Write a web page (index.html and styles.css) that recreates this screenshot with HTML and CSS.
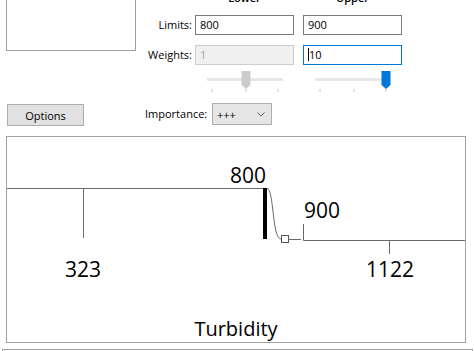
FILE: index.html
```html
<!DOCTYPE html>
<html lang="en">
<head>
  <meta charset="UTF-8" />
  <title>Limit editor</title>
  <link rel="stylesheet" href="styles.css">
</head>
<body>
  <!-- top: preview + limits/weights -->
  <div class="top">
    <div class="preview"></div>
    <div class="form">
      <div></div>
      <div class="colhead">Lower</div>
      <div class="colhead">Upper</div>

      <div class="lbl">Limits:</div>
      <div class="field">800</div>
      <div class="field">900</div>

      <div class="lbl">Weights:</div>
      <div class="field disabled">1</div>
      <div class="field focused"><span class="caret"></span>10</div>

      <div></div>
      <svg class="slider" width="90" height="24" viewBox="0 0 90 24">
        <rect x="0" y="8" width="76" height="3" fill="#e7e7e7"/>
        <path d="M5 19v3M39 19v3M71 19v3" stroke="#c8c8c8" stroke-width="1"/>
        <path d="M34.5 1h9v14l-4.5 4l-4.5-4z" fill="#cccccc"/>
      </svg>
      <svg class="slider" width="90" height="24" viewBox="0 0 90 24">
        <rect x="0" y="8" width="74" height="3" fill="#e7e7e7"/>
        <path d="M5 19v3M39 19v3M71 19v3" stroke="#c8c8c8" stroke-width="1"/>
        <path d="M66.5 1h9v14l-4.5 4l-4.5-4z" fill="#0078d7"/>
      </svg>
    </div>
  </div>

  <!-- options / importance -->
  <div class="controls">
    <button class="btn" type="button">Options</button>
    <span class="imp-label">Importance:</span>
    <div class="combo">
      <span>+++</span>
      <svg width="8" height="5" viewBox="0 0 8 5"><path d="M0.5 0.5l3.5 3.5l3.5-3.5" fill="none" stroke="#606060"/></svg>
    </div>
  </div>

  <!-- chart -->
  <div class="chart">
    <svg width="458" height="205" viewBox="0 0 458 205">
      <g stroke="#6a6a6a" stroke-width="1" fill="none">
        <path d="M0 51.5H257"/>
        <path d="M76.5 51V101"/>
        <path d="M260 51.5C267 51.5 265 102 274 102"/>
        <path d="M282 102.5H294"/>
        <path d="M296.5 87V103.5H458"/>
        <path d="M382.5 103V117"/>
      </g>
      <rect x="256" y="51" width="4" height="51" fill="#000"/>
      <rect x="274.5" y="98.5" width="7" height="7" fill="#fff" stroke="#555"/>
      <g class="ctext">
        <text x="241" y="46" text-anchor="middle">800</text>
        <text x="297" y="81">900</text>
        <text x="76" y="140" text-anchor="middle">323</text>
        <text x="383" y="140" text-anchor="middle">1122</text>
        <text class="axis" x="229" y="199" text-anchor="middle">Turbidity</text>
      </g>
    </svg>
  </div>

  <div class="next-panel"></div>
</body>
</html>
```

FILE: styles.css
```css
/* 기본 */
body {
  margin: 0;
  font-family: "Open Sans", "Liberation Sans", sans-serif;
  font-size: 11px;
  color: #000;
  background: #fff;
  overflow: hidden;
}

/* 상단 영역 */
.top {
  display: flex;
  margin-top: -10px;
  padding-left: 6px;
}
.preview {
  width: 130px; height: 61px;
  border: 1px solid #a0a0a0;
  box-sizing: border-box;
}
.form {
  display: grid;
  grid-template-columns: 51px 108px 100px;
  grid-template-rows: 25px 30px 25px 24px;
  margin-left: 8px;
}
.colhead {
  width: 99px;
  text-align: center;
  font-weight: 600;
  line-height: 16px;
}
.lbl {
  text-align: right;
  padding-right: 3px;
  line-height: 20px;
}
.field {
  width: 99px; height: 20px;
  box-sizing: border-box;
  border: 1px solid #7a7a7a;
  padding-left: 4px;
  line-height: 18px;
}
.field.disabled { border-color: #cccccc; background: #f0f0f0; color: #a0a0a0; }
.field.focused { border-color: #0078d7; }
.caret {
  display: inline-block;
  width: 1px; height: 13px;
  background: #000;
  vertical-align: -2px;
}
.slider { display: block; margin-left: 12px; }

/* 옵션 줄 */
.controls {
  display: flex;
  align-items: flex-start;
  margin-top: 9px;
  padding-left: 7px;
}
.btn {
  width: 77px; height: 22px;
  margin-top: 1px;
  padding: 0;
  border: 1px solid #adadad;
  background: #e1e1e1;
  font: inherit;
  color: #000;
}
.imp-label {
  display: inline-block;
  width: 67px;
  margin-left: 61px;
  line-height: 22px;
}
.combo {
  display: flex;
  align-items: center;
  justify-content: space-between;
  width: 60px; height: 22px;
  box-sizing: border-box;
  padding: 0 6px 0 4px;
  border: 1px solid #adadad;
  background: #e5e5e5;
}

/* 차트 */
.chart {
  margin: 10px 0 0 6px;
  width: 460px; height: 207px;
  border: 1px solid #a0a0a0;
  box-sizing: border-box;
}
.chart svg { display: block; }
.ctext text {
  font-family: "Open Sans", "Liberation Sans", sans-serif;
  font-size: 21px;
  fill: #000;
}
.ctext .axis { font-size: 20px; }

.next-panel {
  margin: 6px 0 0 2px;
  width: 471px; height: 20px;
  border: 1px solid #a0a0a0;
  box-sizing: border-box;
}
```
